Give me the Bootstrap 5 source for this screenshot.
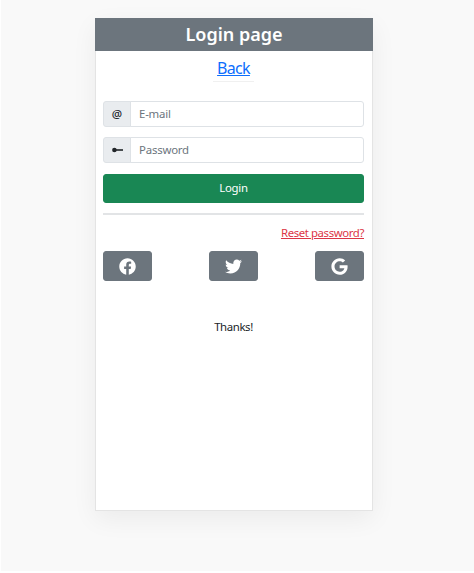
<!DOCTYPE html>
<html lang="en">
<head>
<meta charset="utf-8">
<title>Login page</title>
<link href="https://cdn.jsdelivr.net/npm/bootstrap@5.3.0/dist/css/bootstrap.min.css" rel="stylesheet">
<style>
html, body { height: 100%; }
body { background: #fff; font-family: "Noto Sans", Roboto, sans-serif; font-size: 11.4px; letter-spacing: -.4px; line-height: 16px; color: #212529; }
.backdrop { background: #f9f9f9; margin: 0 0 2px 1px; height: 571px; padding-top: 18px; }
.login-box { width: 278px; height: 493px; margin-left: 94px; border-radius: 0; border-color: #e4e4e4; box-shadow: 0 8px 24px rgba(0,0,0,.06); }
.login-title { height: 33px; margin: -1px -1px 0; background: #6c757d; color: #fff; font-size: 18px; font-weight: 600; line-height: 33px; text-align: center; letter-spacing: 0; }
.back-wrap { height: 33px; }
.back-link { font-size: 16px; line-height: 35px; color: #0d6efd; display: inline-block; padding: 0 4px; border-bottom: 1px solid #f0f0f0; height: 31px; letter-spacing: -.7px; margin-right: 1px; }
.login-body { padding: 17px 8px 0 7px; }
.field-group { height: 26px; margin-bottom: 10px; }
.field-group .input-group-text { width: 28px; padding: 0; justify-content: center; font-size: 11.5px; font-weight: 500; letter-spacing: 0; background: #e9ecef; color: #212529; border-radius: 3px 0 0 3px; }
.field-group .form-control { font-size: 11.4px; letter-spacing: -.2px; padding: 0 8px 1px; height: 26px; border-radius: 0 3px 3px 0; }
.field-group .form-control::placeholder { color: #6c757d; }
.login-btn { height: 29px; font-size: 11.4px; letter-spacing: -.3px; padding: 0 0 1px; background: #198754; border-color: #198754; margin: 11px 0 10px; border-radius: 3px; }
.divider { margin: 0 0 10px; border-top: 2px solid #e2e4e6; opacity: 1; }
.reset-link { font-size: 11.4px; line-height: 16px; color: #dc3545; }
.social-row { margin-top: 10px; }
.social-btn { width: 49px; height: 30px; padding: 0; background: #6c757d; border-color: #6c757d; border-radius: 3px; display: flex; align-items: center; justify-content: center; }
.social-btn svg { width: 17px; height: 17px; fill: #fff; }
.thanks { margin-top: 38px; font-size: 11.4px; line-height: 16px; }
</style>
</head>
<body>
<div class="backdrop">
  <div class="card login-box">
    <div class="login-title">Login page</div>
    <div class="back-wrap text-center"><a href="#" class="back-link">Back</a></div>
    <div class="login-body">
      <form>
        <div class="input-group field-group">
          <span class="input-group-text">@</span>
          <input type="text" class="form-control" placeholder="E-mail">
        </div>
        <div class="input-group field-group">
          <span class="input-group-text"><svg width="11" height="6" viewBox="0 0 11 6"><circle cx="2.4" cy="3" r="2.3" fill="#212529"/><rect x="4" y="2.2" width="7" height="1.6" fill="#212529"/></svg></span>
          <input type="password" class="form-control" placeholder="Password">
        </div>
        <button type="button" class="btn btn-success d-block w-100 login-btn">Login</button>
      </form>
      <hr class="divider">
      <div class="text-end"><a href="#" class="reset-link">Reset password?</a></div>
      <div class="d-flex justify-content-between social-row">
        <button type="button" class="btn btn-secondary social-btn" aria-label="Facebook"><svg viewBox="0 0 512 512"><path d="M504 256C504 119 393 8 256 8S8 119 8 256c0 123.78 90.69 226.38 209.25 245V327.69h-63V256h63v-54.64c0-62.15 37-96.48 93.67-96.48 27.14 0 55.52 4.84 55.52 4.84v61h-31.28c-30.8 0-40.41 19.12-40.41 38.73V256h68.78l-11 71.69h-57.78V501C413.31 482.38 504 379.78 504 256z"/></svg></button>
        <button type="button" class="btn btn-secondary social-btn" aria-label="Twitter"><svg viewBox="0 0 512 512"><path d="M459.37 151.716c.325 4.548.325 9.097.325 13.645 0 138.72-105.583 298.558-298.558 298.558-59.452 0-114.68-17.219-161.137-47.106 8.447.974 16.568 1.299 25.34 1.299 49.055 0 94.213-16.568 130.274-44.832-46.132-.975-84.792-31.188-98.112-72.772 6.498.974 12.995 1.624 19.818 1.624 9.421 0 18.843-1.3 27.614-3.573-48.081-9.747-84.143-51.98-84.143-102.985v-1.299c13.969 7.797 30.214 12.67 47.431 13.319-28.264-18.843-46.781-51.005-46.781-87.391 0-19.492 5.197-37.36 14.294-52.954 51.655 63.675 129.3 105.258 216.365 109.807-1.624-7.797-2.599-15.918-2.599-24.04 0-57.828 46.782-104.934 104.934-104.934 30.213 0 57.502 12.67 76.67 33.137 23.715-4.548 46.456-13.32 66.599-25.34-7.798 24.366-24.366 44.833-46.132 57.827 21.117-2.273 41.584-8.122 60.426-16.243-14.292 20.791-32.161 39.308-52.628 54.253z"/></svg></button>
        <button type="button" class="btn btn-secondary social-btn" aria-label="Google"><svg viewBox="0 0 488 512"><path d="M488 261.8C488 403.3 391.1 504 248 504 110.8 504 0 393.2 0 256S110.8 8 248 8c66.8 0 123 24.5 166.3 64.9l-67.5 64.9C258.5 52.6 94.3 116.6 94.3 256c0 86.5 69.1 156.6 153.7 156.6 98.2 0 135-70.4 140.8-106.9H248v-85.3h236.1c2.3 12.7 3.9 24.9 3.9 41.4z"/></svg></button>
      </div>
      <p class="thanks text-center mb-0">Thanks!</p>
    </div>
  </div>
</div>
<script src="https://cdn.jsdelivr.net/npm/bootstrap@5.3.0/dist/js/bootstrap.bundle.min.js"></script>
</body>
</html>
